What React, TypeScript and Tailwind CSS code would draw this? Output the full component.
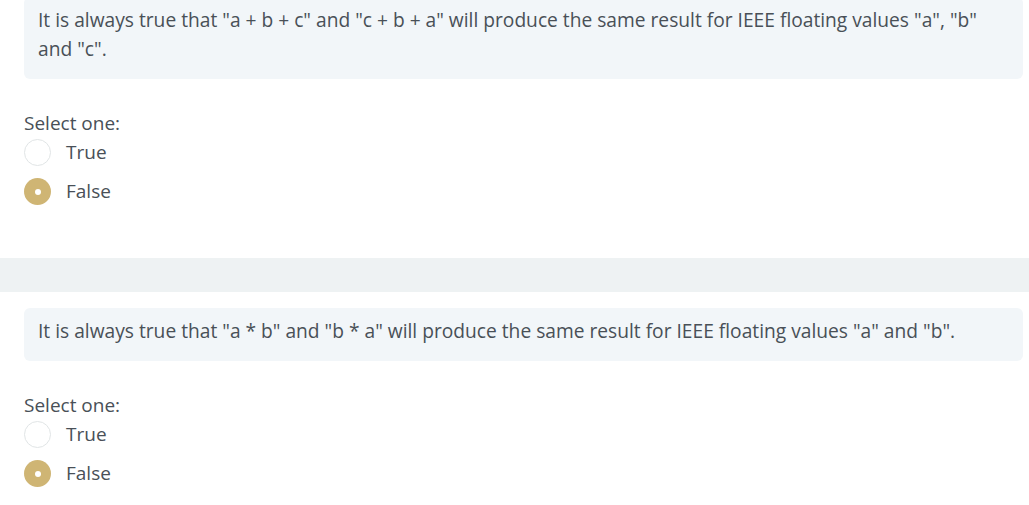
import React from "react";

type Question = {
  text: string;
};

const questions: Question[] = [
  {
    text: 'It is always true that "a + b + c" and "c + b + a" will produce the same result for IEEE floating values "a", "b" and "c".',
  },
  {
    text: 'It is always true that "a * b" and "b * a" will produce the same result for IEEE floating values "a" and "b".',
  },
];

const Radio = ({ checked, label }: { checked: boolean; label: string }) => {
  return (
    <div className="flex items-center h-[27px]">
      {checked ? (
        <div className="flex items-center justify-center w-[27px] h-[27px] rounded-full bg-[#cfb574]">
          <div className="w-[6px] h-[6px] rounded-full bg-white" />
        </div>
      ) : (
        <div className="w-[27px] h-[27px] rounded-full border border-[#e1e5e6] bg-white" />
      )}
      <span className="ml-[15px] text-[19px] text-[#495057]">{label}</span>
    </div>
  );
};

const QuestionBlock = ({ q, first }: { q: Question; first: boolean }) => {
  return (
    <div className={first ? "-mt-[3px]" : "mt-[16px]"}>
      <div className="ml-[24px] mr-[6px] rounded-md bg-[#f2f6f9] px-[14px] pt-[8px] pb-[16px] text-[19.2px] leading-[29px] text-[#495057]">
        {q.text}
      </div>
      <div className="ml-[24px] mt-[32px]">
        <p className="text-[19px] leading-[25px] text-[#495057]">Select one:</p>
        <div className="flex flex-col gap-[12px] mt-[3px]">
          <Radio checked={false} label="True" />
          <Radio checked={true} label="False" />
        </div>
      </div>
    </div>
  );
};

export default function App() {
  return (
    <div
      className="w-[1029px] h-[505px] overflow-hidden bg-white"
      style={{ fontFamily: '"Open Sans", "Noto Sans", sans-serif' }}
    >
      <QuestionBlock q={questions[0]} first={true} />
      <div className="mt-[53px] h-[34px] bg-[#eef2f3]" />
      <QuestionBlock q={questions[1]} first={false} />
    </div>
  );
}
